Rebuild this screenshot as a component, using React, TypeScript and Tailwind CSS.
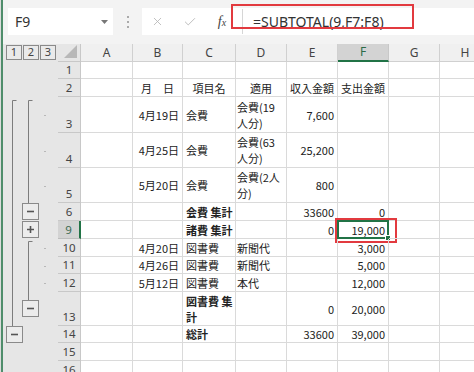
import type { ReactNode } from "react";
import { X, Check } from "lucide-react";

const colW = ["w-[52px]", "w-[50px]", "w-[53px]", "w-[51px]", "w-[51px]", "w-[51px]", "w-[51px]", "w-[51px]"];
const letters = ["A", "B", "C", "D", "E", "F", "G", "H"];

type Cell = { t: ReactNode; al?: "l" | "r" | "c"; b?: boolean };
type Row = { n: string; h: string; c?: Record<number, Cell>; sel?: boolean };

const r = (t: ReactNode): Cell => ({ t, al: "r" });
const l = (t: ReactNode): Cell => ({ t, al: "l" });
const c = (t: ReactNode): Cell => ({ t, al: "c" });
const bold = (t: ReactNode): Cell => ({ t, al: "l", b: true });

const rows: Row[] = [
  { n: "1", h: "h-[17px]" },
  { n: "2", h: "h-[18px]", c: { 1: c("月　日"), 2: c("項目名"), 3: c("適用"), 4: c("収入金額"), 5: c("支出金額") } },
  { n: "3", h: "h-[36px]", c: { 1: r("4月19日"), 2: l("会費"), 3: l(<>会費(19<br />人分)</>), 4: r("7,600") } },
  { n: "4", h: "h-[35px]", c: { 1: r("4月25日"), 2: l("会費"), 3: l(<>会費(63<br />人分)</>), 4: r("25,200") } },
  { n: "5", h: "h-[35px]", c: { 1: r("5月20日"), 2: l("会費"), 3: l(<>会費(2人<br />分)</>), 4: r("800") } },
  { n: "6", h: "h-[18px]", c: { 2: bold("会費 集計"), 4: r("33600"), 5: r("0") } },
  { n: "9", h: "h-[18px]", sel: true, c: { 2: bold("諸費 集計"), 4: r("0"), 5: r("19,000") } },
  { n: "10", h: "h-[18px]", c: { 1: r("4月20日"), 2: l("図書費"), 3: l("新聞代"), 5: r("3,000") } },
  { n: "11", h: "h-[17px]", c: { 1: r("4月26日"), 2: l("図書費"), 3: l("新聞代"), 5: r("5,000") } },
  { n: "12", h: "h-[18px]", c: { 1: r("5月12日"), 2: l("図書費"), 3: l("本代"), 5: r("12,000") } },
  { n: "13", h: "h-[34px]", c: { 2: bold(<>図書費 集<br />計</>), 4: r("0"), 5: r("20,000") } },
  { n: "14", h: "h-[17px]", c: { 2: bold("総計"), 4: r("33600"), 5: r("39,000") } },
  { n: "15", h: "h-[18px]" },
  { n: "16", h: "h-[18px]" },
];

function SheetCell({ cell, idx, selected }: { cell?: Cell; idx: number; selected?: boolean }) {
  const pad = idx === 3 ? "pl-[1px]" : "pl-[3px]";
  const align =
    cell?.al === "r"
      ? "justify-end pr-[3px] text-right"
      : cell?.al === "c"
        ? "justify-center text-center"
        : `justify-start text-left ${pad}`;
  return (
    <div className={`${colW[idx]} relative flex h-full shrink-0 items-center border-r border-b border-[#dadada] ${align}`}>
      {cell && (
        <span className={`whitespace-nowrap leading-[16px] ${cell.b ? "font-bold" : ""}`}>{cell.t}</span>
      )}
      {selected && (
        <>
          <div className="absolute -left-[1px] -top-[1px] h-[19px] w-[52px] border-2 border-[#217346]" />
          <div className="absolute -bottom-[3px] -right-[3px] h-[6px] w-[6px] border border-white bg-[#217346]" />
          <div className="absolute -left-[3px] -top-[3px] h-[25px] w-[62px] border-2 border-[#e23a3f]" />
        </>
      )}
    </div>
  );
}

function OutlineBar() {
  const btn = "#8a8a8a";
  const glyph = "#555";
  return (
    <svg width="55" height="310" viewBox="3 62 55 310">
      <g stroke="#7c7c7c" strokeWidth="1" fill="none">
        <path d="M16.5 100.5 H12.5 V326" />
        <path d="M32.5 100.5 H28.5 V204" />
        <path d="M32.5 241.5 H28.5 V300" />
      </g>
      <g fill="#8a8a8a">
        {[115, 151, 186, 248, 266, 283].map((y) => (
          <rect key={y} x="44.5" y={y} width="1" height="1" />
        ))}
      </g>
      <g fill="#ececec" stroke={btn} strokeWidth="1">
        <rect x="22.5" y="203.5" width="16" height="16" />
        <rect x="22.5" y="221.5" width="16" height="16" />
        <rect x="22.5" y="300.5" width="16" height="16" />
        <rect x="6.5" y="326.5" width="16" height="16" />
      </g>
      <g stroke={glyph} strokeWidth="1.6">
        <path d="M27 211.5 H34" />
        <path d="M27 229.5 H34 M30.5 226 V233" />
        <path d="M27 308.5 H34" />
        <path d="M11 334.5 H18" />
      </g>
    </svg>
  );
}

export default function App() {
  return (
    <div
      className="relative flex h-[372px] w-[474px] overflow-hidden bg-[#f3f3f3] text-[#222]"
      style={{ fontFamily: '"Noto Sans CJK JP", "Noto Sans", sans-serif' }}
    >
      <div className="w-[1px] shrink-0 bg-[#dcdcdc]" />
      <div className="w-[2px] shrink-0 bg-[#4f8d6b]" />
      <div className="flex min-w-0 flex-1 flex-col">
        {/* name box + formula bar */}
        <div className="flex h-[44px] shrink-0 items-start pt-[8px]">
          <div className="ml-[5px] flex h-[27px] w-[105px] items-center justify-between bg-white pl-[7px] pr-[5px] text-[14px] text-[#333]">
            <span style={{ fontFamily: '"Noto Sans", sans-serif' }}>F9</span>
            <svg width="7" height="4" viewBox="0 0 7 4">
              <path d="M0 0 H7 L3.5 4 Z" fill="#777" />
            </svg>
          </div>
          <div className="flex h-[27px] w-[29px] items-center justify-center">
            <svg width="2" height="12" viewBox="0 0 2 12" fill="#aaa">
              <rect x="0" y="0" width="2" height="2" />
              <rect x="0" y="5" width="2" height="2" />
              <rect x="0" y="10" width="2" height="2" />
            </svg>
          </div>
          <div className="flex h-[27px] flex-1 items-center bg-white">
            <div className="flex w-[30px] justify-center">
              <X size={13} strokeWidth={1.5} color="#b3b3b3" />
            </div>
            <div className="flex w-[36px] justify-center">
              <Check size={14} strokeWidth={1.5} color="#b3b3b3" />
            </div>
            <div className="flex w-[28px] justify-center">
              <span className="text-[14px] italic text-[#444]" style={{ fontFamily: '"Liberation Serif", serif' }}>
                f<span className="text-[10px]">x</span>
              </span>
            </div>
            <div className="ml-[6px] h-[25px] w-[1px] bg-[#d6d6d6]" />
            <span className="pl-[10px] text-[14px] text-[#333]" style={{ fontFamily: '"Noto Sans", sans-serif' }}>
              =SUBTOTAL(9,F7:F8)
            </span>
          </div>
        </div>

        {/* sheet */}
        <div className="flex flex-1">
          <div className="flex w-[55px] shrink-0 flex-col bg-[#e6e6e6]">
            <div className="flex h-[18px] items-start gap-[1px] pl-[3px] pt-[1px]">
              {["1", "2", "3"].map((n) => (
                <div
                  key={n}
                  className="flex h-[15px] w-[16px] items-center justify-center border border-[#8a8a8a] bg-[#eaeaea] text-[11px] text-[#444]"
                  style={{ fontFamily: '"Noto Sans", sans-serif' }}
                >
                  {n}
                </div>
              ))}
            </div>
            <OutlineBar />
          </div>

          <div className="flex flex-col bg-white">
            <div className="flex h-[18px] shrink-0 bg-[#f0f0f0] text-[12px] text-[#444]" style={{ fontFamily: '"Noto Sans", sans-serif' }}>
              <div className="flex w-[23px] shrink-0 items-end justify-end border-b border-r border-[#c8c8c8] bg-[#e6e6e6] pb-[2px] pr-[2px]">
                <svg width="14" height="14" viewBox="0 0 14 14">
                  <path d="M13 0 V13 H0 Z" fill="#b8b8b8" />
                </svg>
              </div>
              {letters.map((L, i) =>
                L === "F" ? (
                  <div
                    key={L}
                    className={`${colW[i]} flex shrink-0 items-center justify-center border-b-2 border-r border-b-[#217346] border-r-[#c8c8c8] bg-[#d3d3d3] text-[#2d6b47]`}
                  >
                    {L}
                  </div>
                ) : (
                  <div
                    key={L}
                    className={`${colW[i]} flex shrink-0 items-center justify-center border-b border-r border-[#d0d0d0]`}
                  >
                    {L}
                  </div>
                ),
              )}
            </div>

            {rows.map((row) => (
              <div key={row.n} className={`flex ${row.h} shrink-0 text-[11px]`}>
                <div
                  className={`flex w-[23px] shrink-0 items-end justify-center pb-[1px] text-[11.5px] leading-[15px] ${
                    row.sel
                      ? "border-b border-r-2 border-b-[#bdbdbd] border-r-[#217346] bg-[#d3d3d3] text-[#3d6b52]"
                      : "border-b border-r border-[#c8c8c8] bg-[#e6e6e6] text-[#444]"
                  }`}
                  style={{ fontFamily: '"Noto Sans", sans-serif' }}
                >
                  {row.n}
                </div>
                {letters.map((_, i) => (
                  <SheetCell key={i} idx={i} cell={row.c?.[i]} selected={row.sel && i === 5} />
                ))}
              </div>
            ))}
          </div>
        </div>
      </div>

      {/* annotation around the formula */}
      <div className="pointer-events-none absolute left-[231px] top-[4px] h-[25px] w-[183px] border-2 border-[#e23a3f]" />
    </div>
  );
}
